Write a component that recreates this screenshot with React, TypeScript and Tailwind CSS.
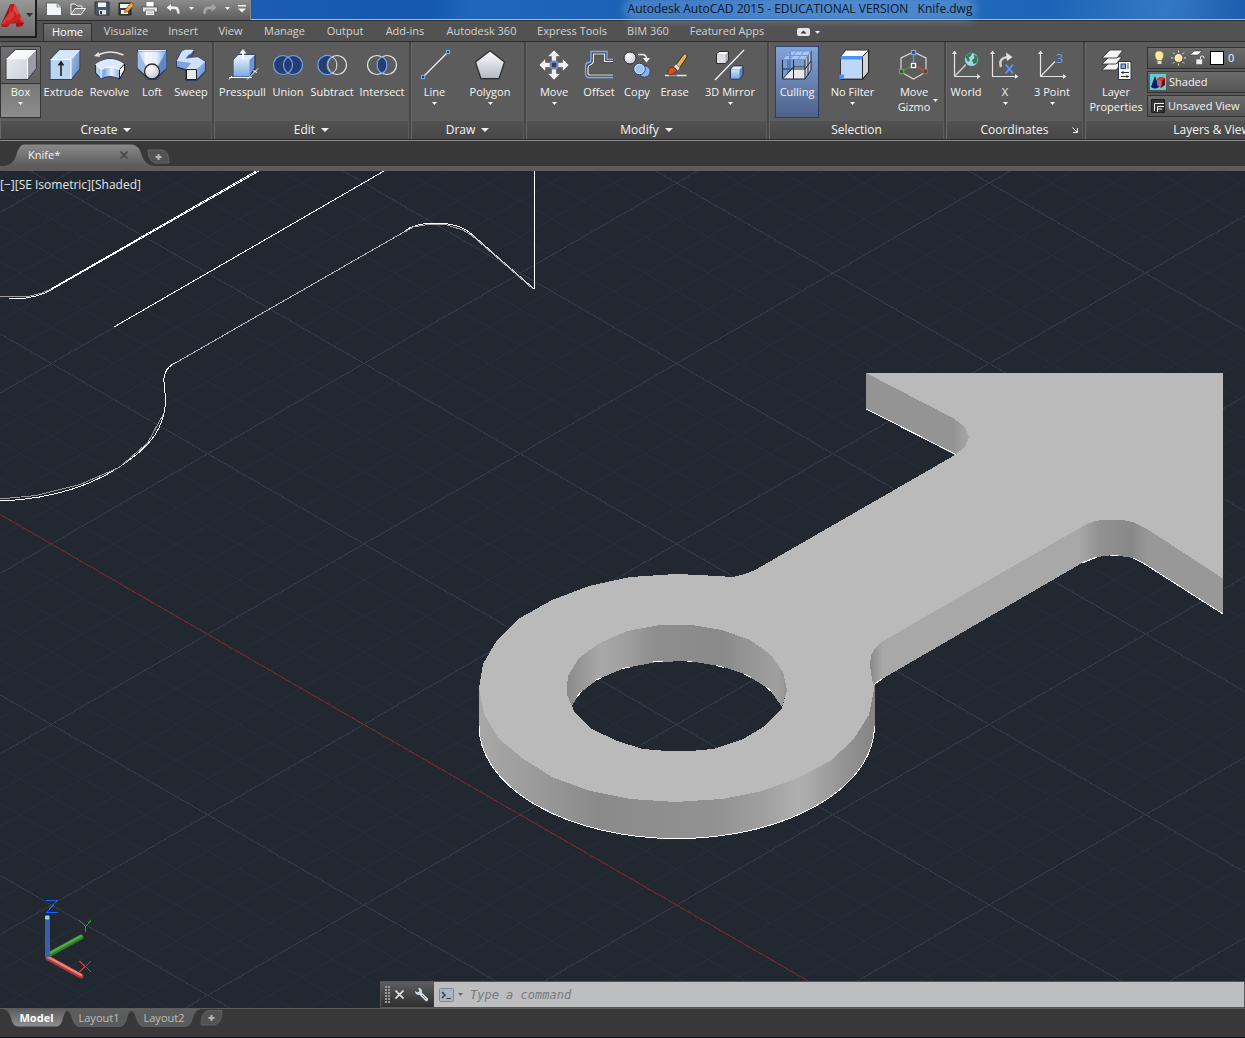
import type { ReactNode } from 'react';

/* ---------- small shared pieces ---------- */

function Caret({ className = '' }: { className?: string }) {
  return (
    <svg width="8" height="4" viewBox="0 0 8 4" className={className} aria-hidden="true">
      <path d="M0 0H8L4 4Z" fill="#f2f2f2" />
    </svg>
  );
}

function TinyCaret({ color = '#f2f2f2' }: { color?: string }) {
  return (
    <svg width="5" height="3" viewBox="0 0 5 3" aria-hidden="true">
      <path d="M0 0H5L2.5 3Z" fill={color} />
    </svg>
  );
}

function Icon32({ children }: { children: ReactNode }) {
  return (
    <svg width="32" height="32" viewBox="0 0 32 32" fill="none" className="shrink-0 overflow-visible" aria-hidden="true">
      {children}
    </svg>
  );
}

function Defs() {
  return (
    <svg width="0" height="0" className="absolute" aria-hidden="true">
      <defs>
        <linearGradient id="white" x1="0" y1="0" x2="0" y2="1">
          <stop offset="0" stopColor="#ffffff" />
          <stop offset="1" stopColor="#b4b8c4" />
        </linearGradient>
        <linearGradient id="paleWhite" x1="0" y1="0" x2="1" y2="1">
          <stop offset="0" stopColor="#e9ebf0" />
          <stop offset="1" stopColor="#cdd0da" />
        </linearGradient>
        <linearGradient id="blue" x1="0" y1="0" x2="0" y2="1">
          <stop offset="0" stopColor="#d3e5fb" />
          <stop offset="1" stopColor="#7ea9e2" />
        </linearGradient>
        <linearGradient id="blueSide" x1="0" y1="0" x2="1" y2="1">
          <stop offset="0" stopColor="#a9c4ec" />
          <stop offset="1" stopColor="#5f83bd" />
        </linearGradient>
        <linearGradient id="loft" x1="0" y1="0" x2="1" y2="0">
          <stop offset="0" stopColor="#a9c3ea" />
          <stop offset=".3" stopColor="#f4f8ff" />
          <stop offset=".65" stopColor="#e4eefc" />
          <stop offset="1" stopColor="#7ea2da" />
        </linearGradient>
        <linearGradient id="bend" x1="0" y1="0" x2="1" y2="0">
          <stop offset="0" stopColor="#c4dbf8" />
          <stop offset=".3" stopColor="#7fa9e2" />
          <stop offset=".55" stopColor="#e6f0fd" />
          <stop offset="1" stopColor="#5f8ed3" />
        </linearGradient>
        <linearGradient id="gold" x1="0" y1="0" x2="1" y2="1">
          <stop offset="0" stopColor="#ffe9a0" />
          <stop offset="1" stopColor="#c47a12" />
        </linearGradient>
        <radialGradient id="ball" cx=".35" cy=".3" r=".8">
          <stop offset="0" stopColor="#ffffff" />
          <stop offset="1" stopColor="#bfc3cc" />
        </radialGradient>
      </defs>
    </svg>
  );
}

/* ---------- ribbon icons ---------- */

const BoxIcon = () => (
  <Icon32>
    <path d="M1.5 9.5L10.5 1H31V19.5L22.5 30H1.5Z" fill="#8e929c" stroke="#2c2c2c" strokeWidth="1.4" />
    <path d="M1.5 9.5L10.5 1H31L22.5 9.5Z" fill="#f7f8fb" />
    <path d="M1.5 9.5H22.5V30H1.5Z" fill="url(#paleWhite)" />
    <path d="M22.5 9.5L31 1V19.5L22.5 30Z" fill="#9a9da8" />
    <path d="M1.5 9.5H22.5V30M22.5 9.5L31 1" stroke="#fff" />
  </Icon32>
);

const ExtrudeIcon = () => (
  <Icon32>
    <path d="M2.5 10.5L11.5 1H31.5V20L23 30H2.5Z" fill="#7a9bd0" stroke="#1d3563" strokeWidth="1.4" />
    <path d="M2.5 10.5L11.5 1H31.5L23 10.5Z" fill="#d7e6f8" />
    <path d="M2.5 10.5H23V30H2.5Z" fill="#b9d5f2" />
    <path d="M23 10.5L31.5 1V20L23 30Z" fill="url(#blueSide)" />
    <path d="M2.5 10.5H23V30M23 10.5L31.5 1" stroke="#fff" />
    <path d="M13 27V14M10.5 16.5L13 13L15.5 16.5" stroke="#222" strokeWidth="1.6" />
  </Icon32>
);

const RevolveIcon = () => (
  <Icon32>
    <path d="M4 6Q16 0 29.5 6" stroke="#e4e4e4" strokeWidth="1.4" />
    <path d="M0 7L4.5 3L6 8Z" fill="#e4e4e4" />
    <path d="M1.500 15Q16 5 30.500 15V21L25.500 30Q16 25 7 30L1.500 24Z" fill="url(#bend)" stroke="#1d3563" strokeWidth="1.2" />
    <path d="M1.500 15Q16 5 30.500 15L25.500 20.500Q16 15.500 7 20.500Z" fill="#dce9fb" />
    <path d="M25.500 20.500L30.500 15V21L25.500 30Z" fill="#f1f1f4" stroke="#222" />
    <path d="M1.500 15L7 20.500Q16 15.500 25.500 20.500M7 20.500V29.500" stroke="#fff" />
  </Icon32>
);

const LoftIcon = () => (
  <Icon32>
    <path d="M1.5 1.5H30.5V19L20 30H12L1.5 19Z" fill="url(#loft)" stroke="#1d3563" strokeWidth="1.3" />
    <path d="M1.5 2L10 17L11 27L1.5 19Z" fill="#9dbae6" />
    <path d="M30.5 2L22 17L21 27L30.5 19Z" fill="#6386c2" />
    <path d="M2 1.5H30" stroke="#e6f0fd" />
    <circle cx="16" cy="22.5" r="7.5" fill="url(#ball)" stroke="#2c2c2c" strokeWidth="1.3" />
  </Icon32>
);

const SweepIcon = () => (
  <Icon32>
    <path d="M7 2.500L10 1H18.500V4L14 9L23 8.500L30 13V22L22 31H11V21L2 18V11Z" fill="#6f93cc" stroke="#1d3563" strokeWidth="1.400" />
    <path d="M7 2.500L10 1H18.500L10.500 9.500L23 8.500L30 13L21.500 20H11.500L16 14L2 12Z" fill="#cfe0f8" stroke="#f0f6ff" strokeWidth=".6" />
    <path d="M2 12L16 14L11.500 20L2 17.500Z" fill="#7fa3da" />
    <path d="M10.500 9.500L14 5.500L18.500 4L14 9.200Z" fill="#40609a" />
    <path d="M22 20L30 13V22L22 30Z" fill="url(#blueSide)" />
    <path d="M11.500 20.500H21.500V30.500H11.500Z" fill="#e8e9ed" stroke="#222" />
  </Icon32>
);

const PresspullIcon = () => (
  <Icon32>
    <path d="M6.5 11L11 6H28V19L22.5 27.5H6.5Z" fill="#6f93cc" stroke="#1d3563" strokeWidth="1.2" />
    <path d="M6.5 11L11 6H28L22.5 11Z" fill="#dce9fb" />
    <path d="M6.5 11H22.5V27.5H6.5Z" fill="url(#blue)" />
    <path d="M16 10V3" stroke="#fff" strokeWidth="2" />
    <path d="M12.5 4.5L16 0L19.5 4.5Z" fill="#fff" />
    <path d="M2 28.500H25M2 30.500L5 27M20 30.500L31 19.500M26 21.500L30 23.500" stroke="#fff" />
  </Icon32>
);

const UnionIcon = () => (
  <Icon32>
    <circle cx="11" cy="16" r="9.5" fill="#263d70" />
    <circle cx="21" cy="16" r="9.5" fill="#263d70" />
    <circle cx="11" cy="16" r="9.5" stroke="#6ea2f0" strokeWidth="1.2" />
    <circle cx="21" cy="16" r="9.5" stroke="#6ea2f0" strokeWidth="1.2" />
  </Icon32>
);

const SubtractIcon = () => (
  <Icon32>
    <circle cx="21" cy="16" r="9.5" stroke="#e8e8e8" strokeWidth="1.2" />
    <path d="M16 7.7A9.5 9.5 0 1 0 16 24.3A9.500 9.500 0 0 1 16 7.700Z" fill="#263d70" stroke="#6ea2f0" strokeWidth="1.2" />
    <path d="M16 7.7A9.5 9.5 0 0 1 16 24.3" stroke="#e8e8e8" />
  </Icon32>
);

const IntersectIcon = () => (
  <Icon32>
    <circle cx="11" cy="16" r="9.5" stroke="#e8e8e8" strokeWidth="1.2" />
    <circle cx="21" cy="16" r="9.5" stroke="#e8e8e8" strokeWidth="1.2" />
    <path d="M16 7.7A9.5 9.5 0 0 1 16 24.3A9.5 9.5 0 0 1 16 7.7Z" fill="#263d70" stroke="#6ea2f0" strokeWidth="1.2" />
  </Icon32>
);

const LineIcon = () => (
  <Icon32>
    <path d="M5.5 26.5L27.5 4.5" stroke="#f0f0f0" strokeWidth="1.2" />
    <rect x="2.500" y="26.500" width="3" height="3" fill="#222" stroke="#78aaff" strokeWidth="1.2" />
    <rect x="27.500" y="1.500" width="3" height="3" fill="#222" stroke="#78aaff" strokeWidth="1.2" />
  </Icon32>
);

const PolygonIcon = () => (
  <Icon32>
    <path d="M16 1.7L30.5 13L25 29.7H7L1.5 13Z" fill="url(#white)" stroke="#2c2c2c" strokeWidth="1.2" />
  </Icon32>
);

const MoveIcon = () => (
  <Icon32>
    <g fill="#f0f0f0" stroke="#444" strokeWidth=".5">
      <path d="M16 1L22.500 7.500H18.500V12H13.500V7.500H9.500Z" />
      <path d="M16 31L9.500 24.500H13.500V20H18.500V24.500H22.500Z" />
      <path d="M1 16L7.500 9.500V13.500H12V18.500H7.500V22.500Z" />
      <path d="M31 16L24.500 22.500V18.500H20V13.500H24.500V9.500Z" />
    </g>
    <rect x="13" y="13" width="6" height="6" fill="#3a3f4a" stroke="#78aaff" strokeWidth="1.2" />
  </Icon32>
);

const OffsetIcon = () => (
  <Icon32>
    <path d="M30 10.500H24V2.500H8V10.500Q8 13.500 5 13.500Q2.500 14 2.500 17V24Q2.500 28.500 5 28.500H30" stroke="#78aaff" strokeWidth="1.3" />
    <path d="M30 12.500H21.500V5H10.500V12Q10 15.500 7 16Q5 16.500 5 19V24Q5 26 7 26H30" stroke="#3e3e3e" strokeWidth="2.4" />
    <path d="M30 12.500H21.500V5H10.500V12Q10 15.500 7 16Q5 16.500 5 19V24Q5 26 7 26H30" stroke="#f2f2f2" strokeWidth="1.2" />
  </Icon32>
);

const CopyIcon = () => (
  <Icon32>
    <circle cx="9" cy="9" r="6" fill="url(#ball)" stroke="#2c2c2c" />
    <path d="M17 5.5H21Q25.5 5.5 25.5 10" stroke="#f2f2f2" strokeWidth="1.3" />
    <path d="M22 9H29L25.5 13.5Z" fill="#f2f2f2" />
    <circle cx="23.5" cy="22.5" r="5.7" fill="#8cb2ec" stroke="#24447e" />
    <circle cx="18.500" cy="20" r="5.700" fill="#9fc1f2" stroke="#24447e" />
    <circle cx="18.500" cy="20" r="4.700" stroke="#dce9fb" strokeWidth=".8" />
  </Icon32>
);

const EraseIcon = () => (
  <Icon32>
    <path d="M16 17L25 5Q28 4 28 8L20 20Z" fill="url(#gold)" stroke="#3c2a08" />
    <path d="M14.5 18L17 15L21 19L18.5 22Z" fill="#d8dde8" stroke="#555" strokeWidth=".6" />
    <path d="M9 25.5Q8 19 13.5 18Q17.5 19 17.5 22Q15 26 9 25.5Z" fill="#d4551b" stroke="#7a2908" />
    <path d="M6 26.5H10M18 26.5H27.5" stroke="#e4e4e4" strokeWidth="1.5" />
    <path d="M10 26.5H18" stroke="#999" strokeWidth="1.2" />
  </Icon32>
);

const MirrorIcon = () => (
  <Icon32>
    <path d="M1 31L30 1" stroke="#f2f2f2" strokeWidth="1.3" />
    <path d="M2.5 5L5.500 2.500H14.500V11L11.500 14.500H2.500Z" fill="#aeb1bb" stroke="#2c2c2c" />
    <path d="M3 5.5H11.5V14H3Z" fill="#dcdee4" />
    <path d="M3 5L5.5 3H14L11.5 5.5Z" fill="#fff" />
    <path d="M16.5 20L19.5 17H29V26L25.5 30H16.5Z" fill="#5f83bd" stroke="#1d3563" />
    <path d="M17 20.5H25.5V29.5H17Z" fill="url(#blue)" />
    <path d="M17 20L19.5 17.5H28.5L25.5 20.5Z" fill="#e6f0fd" />
  </Icon32>
);

const CullingIcon = () => (
  <Icon32>
    <path d="M1.5 10.5L9 2H30V21L24 30H1.5Z" fill="#7b9ad0" />
    <path d="M1.5 10.5L9 2H30L24 10.5Z" fill="#a8c6f6" />
    <path d="M12.500 18H24V30H1.500Z" fill="#e6e8ee" />
    <path d="M24 10.5L30 2V21L24 30Z" fill="#c6cad4" />
    <path d="M1.500 10.500V30H24V10.500M24 30L30 21V2M12.500 10.500V30M1.500 20H24L30 12M1.500 30L12.500 18H24M27 6V26" stroke="#1c2538" />
    <path d="M7 10V23M9 2V21L1.500 30" stroke="#3f5f9c" />
    <path d="M1.500 10.500L9 2H30M1.500 10.500H24L30 2M5 6.500H27M9 10L16 2M17 10.500L23 2" stroke="#5b97f5" />
  </Icon32>
);

const NoFilterIcon = () => (
  <Icon32>
    <path d="M4 7.5L9 1.5H31.5V23L25.5 30H4Z" fill="#b5b8c2" stroke="#222" strokeWidth="1.3" />
    <path d="M4 7.5L9 1.5H31.5L25.5 7.5Z" fill="#fff" />
    <path d="M4 7.5H25.5V29.5H4Z" fill="#bcd8f6" />
    <path d="M25.5 7.5L31.5 1.5V23L25.5 30Z" fill="#d3d4da" stroke="#222" />
    <path d="M3.5 7H25.5V10.5H3.5Z" fill="#4f92f7" />
    <path d="M2.5 25.5H7V30H2.5Z" fill="#4f92f7" />
  </Icon32>
);

const GizmoIcon = () => (
  <Icon32>
    <path d="M15.5 3L28 9V23L15.5 30L3 23V9Z" stroke="#d8d8d8" strokeWidth="1.2" />
    <path d="M15.5 14V4" stroke="#5b97f5" strokeWidth="1.3" />
    <path d="M14 17L4 22" stroke="#4aa02c" strokeWidth="1.3" />
    <path d="M17 17L27 22" stroke="#d5482b" strokeWidth="1.3" />
    <rect x="13.5" y="1.5" width="4" height="4" fill="#444" stroke="#6ea2f0" strokeWidth="1.3" />
    <rect x="13.5" y="14.5" width="4" height="4" fill="#444" stroke="#fff" strokeWidth="1.3" />
    <rect x="1.5" y="20.5" width="4" height="4" fill="#444" stroke="#4fb52e" strokeWidth="1.3" />
    <rect x="25.5" y="20.5" width="4" height="4" fill="#444" stroke="#e2492b" strokeWidth="1.3" />
  </Icon32>
);

const Axes = ({ x }: { x: number }) => (
  <g transform={`translate(${x} 0)`}>
    <path d="M1.5 4V27.5H25" stroke="#e4e4e4" strokeWidth="1.2" />
    <path d="M-1 5L1.5 1.5L4 5ZM24 25L27.5 27.5L24 30Z" fill="#e4e4e4" />
  </g>
);

const WorldIcon = () => (
  <Icon32>
    <Axes x={3} />
    <path d="M4.5 27.5L16 15.5" stroke="#c9c9c9" strokeWidth="1.6" />
    <circle cx="21.5" cy="10.5" r="7" fill="#a9d4e6" stroke="#46606a" />
    <path d="M15.500 8Q18 4 22 4L21 7L18.500 8.500L20 11L18 13ZM23.500 5L27.500 7.500Q28 11 26.500 14L23.500 15L22 11L24.500 9Z" fill="#2c7f4e" />
  </Icon32>
);

const XIcon = () => (
  <Icon32>
    <Axes x={2} />
    <path d="M12 18Q9 9 19 8" stroke="#d0d0d0" strokeWidth="2.4" />
    <path d="M17 3.5L23.5 8L18 12Z" fill="#e4e4e4" />
    <path d="M16.5 15.500L24 24.500M24 15.500L16.500 24.500" stroke="#5b97f5" strokeWidth="1.8" />
  </Icon32>
);

const ThreePointIcon = () => (
  <Icon32>
    <Axes x={3} />
    <path d="M4.5 27.5L19 12.5" stroke="#e4e4e4" strokeWidth="1.2" />
    <text x="20" y="14" fill="#6b9ef0" fontSize="13" fontFamily="Open Sans, sans-serif">3</text>
  </Icon32>
);

const LayerIcon = () => (
  <Icon32>
    <g fill="#f4f4f4" stroke="#3a3a3a" strokeWidth=".9">
      <path d="M2 21L9 14H22L16 21Z" />
      <path d="M2 15L9 8H22L16 15Z" />
      <path d="M2 9L10 1H23L17 9Z" />
    </g>
    <rect x="18.5" y="12.5" width="12.5" height="18" fill="#f4f4f6" stroke="#2c3850" />
    <rect x="21" y="15" width="4.5" height="4.5" fill="#7da9ee" stroke="#24447e" />
    <path d="M28 14V20" stroke="#555" />
    <path d="M21 23.5H29M21 27.5H29M23 22V25M27 26V29" stroke="#333" />
  </Icon32>
);

/* ---------- ribbon structure ---------- */

type Tool = { label: string; icon: ReactNode; width: string; menu?: boolean; side?: boolean; active?: string };

function ToolButton({ label, icon, width, menu, side, active = '' }: Tool) {
  return (
    <button
      type="button"
      className={`relative flex h-[72px] shrink-0 flex-col items-center pt-[3px] text-[11px] leading-[15px] text-[#f4f4f4] ${width} ${active}`}
    >
      {icon}
      <span className="mt-[3px] whitespace-pre text-center">{label}</span>
      {menu && (
        <span className="mt-[3px]">
          <TinyCaret />
        </span>
      )}
      {side && (
        <span className="absolute right-1 top-[53px] flex">
          <TinyCaret />
        </span>
      )}
    </button>
  );
}

function Panel({
  title,
  width,
  pad = '',
  caret,
  launcher,
  children,
}: {
  title: string;
  width: string;
  pad?: string;
  caret?: boolean;
  launcher?: boolean;
  children: ReactNode;
}) {
  return (
    <section
      aria-label={title}
      className={`flex shrink-0 flex-col border-r-2 border-r-[#464646] bg-[#5c5c5c] shadow-[inset_1px_0_0_#686868] ${width}`}
    >
      <div className={`flex h-[79px] pt-1 ${pad}`}>{children}</div>
      <div className="relative mx-px flex h-[18px] items-center justify-center gap-[6px] bg-linear-to-b from-[#525252] to-[#474747] text-[12px] text-[#f4f4f4]">
        <span>{title}</span>
        {caret && <Caret />}
        {launcher && (
          <button type="button" aria-label={`${title} settings`} className="absolute right-1 top-[6px]">
            <svg width="6" height="6" viewBox="0 0 6 6" fill="none" stroke="#f2f2f2">
              <path d="M.5 .5L5 5M5.5 1V5.5H1" />
            </svg>
          </button>
        )}
      </div>
    </section>
  );
}

const boxActive =
  'shadow-[inset_0_0_0_1px_#343434] bg-[linear-gradient(#707070_0,#606060_37px,#343434_37px,#343434_38px,#787878_38px,#8d8d8d_72px)]';

function Ribbon() {
  return (
    <div className="flex h-[98px] overflow-hidden border-b border-b-[#2b2b2b] bg-[#5c5c5c]">
      <Panel title="Create" width="w-[214px]" caret>
        <ToolButton label="Box" icon={<BoxIcon />} width="w-[41px]" menu active={boxActive} />
        <ToolButton label="Extrude" icon={<ExtrudeIcon />} width="w-[45px]" />
        <ToolButton label="Revolve" icon={<RevolveIcon />} width="w-[47px]" />
        <ToolButton label="Loft" icon={<LoftIcon />} width="w-[38px]" />
        <ToolButton label="Sweep" icon={<SweepIcon />} width="w-[40px]" />
      </Panel>
      <Panel title="Edit" width="w-[197px]" pad="pl-1" caret>
        <ToolButton label="Presspull" icon={<PresspullIcon />} width="w-[49px]" />
        <ToolButton label="Union" icon={<UnionIcon />} width="w-[42px]" />
        <ToolButton label="Subtract" icon={<SubtractIcon />} width="w-[46px]" />
        <ToolButton label="Intersect" icon={<IntersectIcon />} width="w-[54px]" />
      </Panel>
      <Panel title="Draw" width="w-[115px]" caret>
        <ToolButton label="Line" icon={<LineIcon />} width="w-[47px]" menu />
        <ToolButton label="Polygon" icon={<PolygonIcon />} width="w-[64px]" menu />
      </Panel>
      <Panel title="Modify" width="w-[243px]" pad="pl-[6px]" caret>
        <ToolButton label="Move" icon={<MoveIcon />} width="w-[44px]" menu />
        <ToolButton label="Offset" icon={<OffsetIcon />} width="w-[46px]" />
        <ToolButton label="Copy" icon={<CopyIcon />} width="w-[30px]" />
        <ToolButton label="Erase" icon={<EraseIcon />} width="w-[45px]" />
        <ToolButton label="3D Mirror" icon={<MirrorIcon />} width="w-[66px]" menu />
      </Panel>
      <Panel title="Selection" width="w-[177px]" pad="pl-[6px]">
        <ToolButton
          label="Culling"
          icon={<CullingIcon />}
          width="w-[44px]"
          active="shadow-[inset_0_0_0_1px_#2c3e63] bg-linear-to-b from-[#84a5d8] to-[#4d618a]"
        />
        <ToolButton label="No Filter" icon={<NoFilterIcon />} width="w-[67px]" menu />
        <ToolButton label={'Move\nGizmo'} icon={<GizmoIcon />} width="w-[56px]" side />
      </Panel>
      <Panel title="Coordinates" width="w-[139px]" launcher>
        <ToolButton label="World" icon={<WorldIcon />} width="w-[40px]" />
        <ToolButton label="X" icon={<XIcon />} width="w-[38px]" menu />
        <ToolButton label="3 Point" icon={<ThreePointIcon />} width="w-[56px]" menu />
      </Panel>
      <Panel title="Layers & View" width="w-[270px]" caret>
        <ToolButton label={'Layer\nProperties'} icon={<LayerIcon />} width="w-[62px]" />
        <LayerControls />
      </Panel>
    </div>
  );
}

const field = 'flex h-[22px] items-center border border-[#333] bg-linear-to-b from-[#6b6b6b] to-[#555]';

function LayerControls() {
  return (
    <div className="flex flex-1 flex-col gap-[2px] pt-px text-[11px] text-[#f4f4f4]">
      <button type="button" aria-label="Current layer 0" className={`${field} pl-[5px]`}>
        <svg width="57" height="18" viewBox="0 0 57 18" fill="none" aria-hidden="true">
          <path d="M6 2Q10.5 2 10.500 6.500Q10.500 9 8.500 11.500H4.500Q2 9 2 6.500Q2 2 6 2Z" fill="#ffe9a0" stroke="#8c7a3a" strokeWidth=".6" />
          <path d="M4.5 12H8.5V15H4.5Z" fill="#d9d9d9" />
          <circle cx="25.5" cy="9" r="3.5" fill="#ffe9a0" stroke="#fff7d6" />
          <path d="M25.5 1.500V3.500M25.500 14.500V16.500M18 9H20M31 9H33M20 3.500L21.500 5M31 3.500L29.500 5M20 14.500L21.500 13M31 14.500L29.500 13" stroke="#fff0b8" />
          <path d="M37 6L41 2H49L45 6Z" fill="#fff" stroke="#333" strokeWidth=".6" />
          <path d="M43 10H49.5V15.5H43Z" fill="#ececec" stroke="#555" strokeWidth=".6" />
          <path d="M47.5 10V8Q48 6.500 50 7Q51 7.500 51 9.500" stroke="#ececec" />
        </svg>
        <span className="mr-1 size-[14px] border border-black bg-white" />
        <span>0</span>
      </button>
      <label className={`${field} pl-[2px]`}>
        <svg width="16" height="16" viewBox="0 0 16 16" aria-hidden="true">
          <path d="M0 0H16V16H0Z" fill="#5fcfd0" />
          <path d="M1 13L5 2L9 13Q5 16 1 13Z" fill="#14186e" />
          <path d="M7 5L10 3L15 4V11L11 14L7 11Z" fill="#5c1214" />
          <path d="M7 5L10 3L15 4L12 7Z" fill="#ff2626" />
          <path d="M7 5L12 7L11 14L7 11Z" fill="#b06a6a" />
        </svg>
        <select aria-label="Visual style" className="ml-[3px] w-40 appearance-none bg-transparent outline-none">
          <option>Shaded</option>
        </select>
      </label>
      <label className={`${field} pl-[3px]`}>
        <svg width="14" height="14" viewBox="0 0 14 14" fill="none" aria-hidden="true">
          <path d="M.5 .5H13.5V13.5H.5Z" fill="#333" stroke="#1e1e1e" />
          <path d="M3.500 12V4.500H13M6.500 13V7.500H13M6.500 10H11" stroke="#f2f2f2" />
        </svg>
        <select aria-label="View" className="ml-[3px] w-40 appearance-none bg-transparent outline-none">
          <option>Unsaved View</option>
        </select>
      </label>
    </div>
  );
}

/* ---------- header ---------- */

function AppLogo() {
  return (
    <svg width="26" height="28" viewBox="0 0 26 28" aria-hidden="true">
      <path d="M10.500 3H14.500L24 22L22 25L16.500 26L16 22.500H10L8 26L1.500 26L1 24Z" fill="#b81b1e" />
      <path d="M10.500 3L1 24L8 21Q13 18 15 14L13 8L11 12Z" fill="#dd3a37" />
      <path d="M10.500 3L9 12L4 19L1 24Z" fill="#8f1418" />
      <path d="M14.500 3L24 22L20 19L13 8Z" fill="#e04a44" />
      <path d="M6 20Q14 19 19 12L21 16Q17 21 10 22.500L4 24Z" fill="#c92427" />
      <path d="M16 22L24 22L22 25L16.500 26Z" fill="#9c171b" />
    </svg>
  );
}

function QuickAccess() {
  return (
    <div className="flex h-full w-[214px] items-center gap-2 border-r border-r-[#888] bg-linear-to-b from-[#8c8c8c] to-[#5d5d5d] pb-[3px] pl-[9px]">
      <button type="button" aria-label="New">
        <svg width="16" height="14" viewBox="0 0 16 14"><path d="M.5 1H11L15.5 5V13.5H.5Z" fill="#f4f5f8" stroke="#444" strokeWidth=".7" /><path d="M11 1V5H15.5" fill="#c4c6cc" stroke="#777" strokeWidth=".6" /></svg>
      </button>
      <button type="button" aria-label="Open">
        <svg width="16" height="14" viewBox="0 0 16 14" fill="none" stroke="#f2f2f2"><path d="M1 12.5V2H5L7 4H12V6" fill="#666" /><path d="M1 12.5L5 6.5H15.5L11 12.5Z" fill="#888" /></svg>
      </button>
      <button type="button" aria-label="Save">
        <svg width="16" height="15" viewBox="0 0 16 15"><path d="M1 1H15V14H2.5L1 12.5Z" fill="#4a5670" stroke="#333" /><path d="M4 1.5H12V6H4Z" fill="#f4f4f4" /><path d="M5 9H12V13.5H5Z" fill="#e0e3ea" /><path d="M6 10H8V13H6Z" fill="#333" /></svg>
      </button>
      <button type="button" aria-label="Save as">
        <svg width="16" height="15" viewBox="0 0 16 15"><path d="M1 2H13V14H1Z" fill="#3d3d3d" stroke="#222" /><path d="M2 3H12V7H2Z" fill="#f4f4f4" /><path d="M3 9H10V13H3Z" fill="#eee" /><path d="M7 9L13 1.5L16 4L10 10.5L6.5 11.5Z" fill="#f0a830" stroke="#7a4b08" strokeWidth=".7" /><path d="M13 1.5L14 .5L16 3L15.5 4Z" fill="#e0413a" /></svg>
      </button>
      <button type="button" aria-label="Plot">
        <svg width="16" height="15" viewBox="0 0 16 15"><path d="M4 .5H12V6H4Z" fill="#fff" stroke="#666" strokeWidth=".7" /><path d="M.5 6H15.5V11H.5Z" fill="#e8e8e8" stroke="#444" strokeWidth=".7" /><path d="M3.5 9H12.5V14.5H3.5Z" fill="#f8f8f8" stroke="#555" strokeWidth=".7" /><path d="M5 11H11M5 12.7H11" stroke="#999" strokeWidth=".7" /></svg>
      </button>
      <button type="button" aria-label="Undo">
        <svg width="15" height="13" viewBox="0 0 15 13"><path d="M0 5.5L5.5 1V4H9Q14 4 14 12H11Q11 7.5 8.5 7.5H5.5V10Z" fill="#f0f0f0" stroke="#555" strokeWidth=".6" /></svg>
      </button>
      <TinyCaret />
      <button type="button" aria-label="Redo">
        <svg width="15" height="13" viewBox="0 0 15 13"><path d="M15 5.5L9.5 1V4H6Q1 4 1 12H4Q4 7.5 6.5 7.5H9.5V10Z" fill="#a6a6a6" stroke="#777" strokeWidth=".6" /></svg>
      </button>
      <TinyCaret />
      <button type="button" aria-label="Customize quick access toolbar">
        <svg width="8" height="8" viewBox="0 0 8 8" fill="#f4f4f4"><path d="M0 0H8V1.5H0ZM0 3.5H8L4 7.5Z" /></svg>
      </button>
    </div>
  );
}

const tabs = [
  { label: 'Home', width: 'w-[49px]' },
  { label: 'Visualize', width: 'w-[68px]' },
  { label: 'Insert', width: 'w-[46px]' },
  { label: 'View', width: 'w-[49px]' },
  { label: 'Manage', width: 'w-[59px]' },
  { label: 'Output', width: 'w-[62px]' },
  { label: 'Add-ins', width: 'w-[58px]' },
  { label: 'Autodesk 360', width: 'w-[95px]' },
  { label: 'Express Tools', width: 'w-[86px]' },
  { label: 'BIM 360', width: 'w-[66px]' },
  { label: 'Featured Apps', width: 'w-[92px]' },
];

function Header() {
  return (
    <header className="flex h-[42px] overflow-hidden border-b border-b-[#2e2e2e] bg-[#525252]">
      <button
        type="button"
        aria-label="Application menu"
        className="flex h-[38px] w-[37px] shrink-0 items-center border-b-2 border-r-2 border-[#1e1e1e] bg-linear-to-b from-[#979797] to-[#6e6e6e] pb-[6px]"
      >
        <AppLogo />
        <svg width="7" height="4" viewBox="0 0 7 4"><path d="M0 0H7L3.5 4Z" fill="#2f3338" /></svg>
      </button>
      <div className="flex min-w-0 flex-1 flex-col">
        <div className="flex h-[21px] border-b border-b-[#2e2e2e]">
          <QuickAccess />
          <div className="relative flex-1 border-b border-b-[#8fc4f0] bg-[linear-gradient(100deg,#1c5cb4_0%,#1458b0_18%,#1f66bd_22%,#1a60b4_42%,#2a70c2_60%,#1d64b6_80%,#3478c4_92%,#1c5cae_100%)]">
            <h1 className="flex h-full items-center justify-center pb-px pl-[104px] text-[12px] leading-4 text-[#0a1626]">
              <span className="whitespace-nowrap rounded-full bg-[#8fbbe8]/35 shadow-[0_0_8px_5px_rgba(143,187,232,0.35)]">
                Autodesk AutoCAD 2015 - EDUCATIONAL VERSION &nbsp; Knife.dwg
              </span>
            </h1>
          </div>
        </div>
        <nav aria-label="Ribbon tabs" className="flex h-5 items-end pl-[6px] text-[11px]">
          {tabs.map((t, i) => (
            <button
              key={t.label}
              type="button"
              className={
                i === 0
                  ? `h-[18px] shrink-0 border border-b-0 border-[#2e2e2e] bg-linear-to-b from-[#6e6e6e] to-[#5c5c5c] pb-[2px] leading-[14px] text-white ${t.width}`
                  : `h-[18px] shrink-0 whitespace-nowrap pb-[2px] leading-[16px] text-[#d2d2d2] ${t.width}`
              }
            >
              {t.label}
            </button>
          ))}
          <button type="button" aria-label="Minimize ribbon" className="ml-6 flex h-[18px] items-center gap-[5px]">
            <svg width="13" height="8" viewBox="0 0 13 8"><rect width="13" height="8" rx="2" fill="#e6e6ea" /><path d="M3.5 5.5H9.5L6.5 2.5Z" fill="#333" /></svg>
            <TinyCaret />
          </button>
        </nav>
      </div>
    </header>
  );
}

function FileTabs() {
  return (
    <div className="border-b-[5px] border-t border-b-[#5c5c5c] border-t-[#8a8a8a] bg-[#383838]">
      <div className="flex h-[25px] items-end pl-1 text-[11px]">
        <div className="relative flex h-[22px] w-[150px] items-center justify-between pl-6 pr-[26px]">
          <svg viewBox="0 0 150 22" preserveAspectRatio="none" className="absolute inset-0 size-full" aria-hidden="true">
            <defs>
              <linearGradient id="fileTab" x1="0" y1="0" x2="0" y2="1">
                <stop offset="0" stopColor="#8a8a8a" />
                <stop offset="1" stopColor="#5c5c5c" />
              </linearGradient>
            </defs>
            <path d="M0 22Q9 21 12 12Q15 .5 20 .5H128Q135 1 138 12Q141 21 150 22Z" fill="url(#fileTab)" />
          </svg>
          <span className="relative text-[#f4f4f4]">Knife*</span>
          <button type="button" aria-label="Close Knife" className="relative">
            <svg width="8" height="8" viewBox="0 0 8 8" stroke="#4a4a4a" strokeWidth="1.8"><path d="M.5 .5L7.5 7.5M7.5 .5L.5 7.5" /></svg>
          </button>
        </div>
        <button type="button" aria-label="New tab" className="-ml-[7px] mb-[2px]">
          <svg width="23" height="15" viewBox="0 0 23 15"><path d="M1 1H15Q22 2 22 14H8Q1 12 1 1Z" fill="#525252" stroke="#626262" /><path d="M11.500 5V11M8.500 8H14.500" stroke="#b4b4b4" strokeWidth="2" /></svg>
        </button>
      </div>
    </div>
  );
}

/* ---------- model space ---------- */

const SLOPE = 0.5774;
const gridLines = Array.from({ length: 120 }, (_, i) => i - 60);

/* Isometric grid: every fifth line is a major one. */
function Grid() {
  const width = 2600;
  const rise = width * SLOPE;
  const lines = (major: boolean) =>
    gridLines
      .filter((k) => (k % 5 === 0) === major)
      .map((k) => {
        const down = 153.3 + k * 36.1;
        const up = 573.6 + k * 36.1;
        return `M0 ${down}L${width} ${down + rise}M0 ${up}L${width} ${up - rise}`;
      })
      .join('');
  return (
    <g fill="none" shapeRendering="crispEdges">
      <path d={lines(false)} stroke="#252d38" />
      <path d={lines(true)} stroke="#323a4a" />
    </g>
  );
}

function Wireframe() {
  return (
    <g fill="none" stroke="#fff" shapeRendering="crispEdges">
      <path d="M259 171L50 290.500Q40 296 26 298H9" />
      <path d="M258 170L50 289.500" />
      <path d="M0 296.500H28L42 293L51 289" stroke="#a0a0a0" />
      <path d="M384 171L114 327" />
      <path d="M404 232L177 362" stroke="#b4b6ba" />
      <path d="M404 231.500Q414 223.500 434 223Q460 223 472 234.500L534 289" />
      <path d="M405 232L413 227L428 224.500H445L463 230L472 235.500L533 289" stroke="#a5a5a5" />
      <path d="M534.5 171V289" />
      <path d="M177 362Q163 368 164 382L165.500 398Q166 412 159 428Q151 444 132 458C100 483 55 499 0 501" />
      <path d="M163 415L147.500 443L119 467.500L80 484.500L36 495.500L0 499" stroke="#9a9a9a" />
    </g>
  );
}

const topFace =
  'M866 373H1223V578.5L1147 529L1133 522L1122 520H1102L1095 521L1087 524L1078 529L883 641L876 647L871 655L870 665L872 680L874 685V690L869 715L853 740L830 761L798 778L762 791L722 799L675 802L630 799L590 791L552 777L522 758L499 739L484 714L479 688L483 664L497 640L520 618L552 600L589 586L630 577L675 574L700 575L733 577L745 574L755 570L955 455L965 447L969 437L965 427L953 418Z';
const hole =
  'M567 687L568 676L579 658L600 643L627 631L660 625H692L722 630L750 640L770 654L783 672L787 690L782 708L765 726L743 739L713 749L690 751H667L643 749L617 741L592 729L575 713L572 706L567 695Z';

function Solid() {
  return (
    <g shapeRendering="crispEdges">
      <defs>
        <linearGradient id="ring" gradientUnits="userSpaceOnUse" x1="479" y1="0" x2="875" y2="0">
          <stop offset="0" stopColor="#a8a8a8" />
          <stop offset=".1" stopColor="#9f9f9f" />
          <stop offset=".3" stopColor="#8a8a8a" />
          <stop offset=".6" stopColor="#929292" />
          <stop offset=".72" stopColor="#a0a0a0" />
          <stop offset=".81" stopColor="#b0b0b0" />
          <stop offset=".92" stopColor="#949494" />
          <stop offset="1" stopColor="#848484" />
        </linearGradient>
        <linearGradient id="bore" gradientUnits="userSpaceOnUse" x1="567" y1="0" x2="787" y2="0">
          <stop offset="0" stopColor="#8a8a8a" />
          <stop offset=".15" stopColor="#a8a8a8" />
          <stop offset=".26" stopColor="#a0a0a0" />
          <stop offset=".4" stopColor="#8e8e8e" />
          <stop offset=".7" stopColor="#8a8a8a" />
          <stop offset=".95" stopColor="#a0a0a0" />
          <stop offset="1" stopColor="#949494" />
        </linearGradient>
        <linearGradient id="edge" gradientUnits="userSpaceOnUse" x1="870" y1="0" x2="1223" y2="0">
          <stop offset="0" stopColor="#888" />
          <stop offset=".035" stopColor="#a8a8a8" />
          <stop offset=".59" stopColor="#a8a8a8" />
          <stop offset=".65" stopColor="#929292" />
          <stop offset=".74" stopColor="#888" />
          <stop offset=".79" stopColor="#989898" />
          <stop offset="1" stopColor="#989898" />
        </linearGradient>
        <linearGradient id="barb" gradientUnits="userSpaceOnUse" x1="866" y1="0" x2="969" y2="0">
          <stop offset="0" stopColor="#949494" />
          <stop offset=".85" stopColor="#949494" />
          <stop offset="1" stopColor="#a8a8a8" />
        </linearGradient>
      </defs>
      <path d="M479 688L484 714L499 739L522 758L552 777L590 791L630 799L675 802L722 799L762 791L798 778L830 761L853 740L869 715L874.500 685V726A197.500 112.500 0 0 1 479 726Z" fill="url(#ring)" />
      <path d="M479 726A197.500 112.500 0 0 0 874.500 726" fill="none" stroke="#fff" />
      <path d={topFace + hole} fillRule="evenodd" fill="#bababa" />
      <path d="M866 373L953 418L965 427L969 437L965 447L955 455L866 409Z" fill="url(#barb)" />
      <path d="M866 409L956 454.500" stroke="#fff" />
      <path d="M1223 578.5L1147 529L1133 522L1122 520H1102L1095 521L1087 524L1078 529L883 641L876 647L871 655L870 665L872 680L874 685L882 679L1082 563L1097 557L1113 555L1133 558L1143 563L1223 614.5Z" fill="url(#edge)" />
      <path d="M874 684.500L882 679M1082 563L1097 557M1110 555.500H1118M1133 558L1143 563L1223 614" fill="none" stroke="#fff" />
      <path d="M572 706L567 695V687L568 676L579 658L600 643L627 631L660 625H692L722 630L750 640L770 654L783 672L787 690L782 707L770 690L747 675L720 666L688 661L657 662L625 668L598 679L579 694Z" fill="url(#bore)" />
      <path d="M576 698L582 691M595 680.500L601 678M622 668.500L630 667M653 662L663 661.500M687 661L692 662M716 665.500L724 667.500M744 674L751 677.500M766 687L772 692" fill="none" stroke="#fff" />
    </g>
  );
}

function UcsIcon() {
  return (
    <g fill="none" strokeLinecap="round">
      <path d="M50 954L81 937" stroke="#2f7d2f" strokeWidth="5" />
      <path d="M50 953L81 936" stroke="#4fae4a" strokeWidth="2" />
      <path d="M48 958L81 976" stroke="#a83c3c" strokeWidth="5" />
      <path d="M48 957L81 975" stroke="#f08080" strokeWidth="2.5" />
      <path d="M47.5 918V957" stroke="#3a5ea8" strokeWidth="5" strokeLinecap="butt" />
      <path d="M46 916H49V919H46Z" fill="#8fd4f0" stroke="#8fd4f0" />
      <g shapeRendering="crispEdges" strokeLinecap="butt">
        <path d="M46 900.5H57.5L46.5 912.5H58" stroke="#1464ff" />
        <path d="M79.5 920.5L85.5 926.5L91 920.5M85.5 926.5V932" stroke="#23a023" />
        <path d="M79.5 961L91 972M91 961L79.5 972" stroke="#d23232" />
      </g>
    </g>
  );
}

function CommandLine() {
  return (
    <form className="absolute bottom-0 left-[380px] right-0 flex h-[27px] border border-[#555]" onSubmit={(e) => e.preventDefault()}>
      <div className="flex w-[53px] shrink-0 items-center bg-linear-to-b from-[#5e5e5e] to-[#2f2f2f] pl-1">
        <svg width="5" height="18" viewBox="0 0 5 18" fill="#9a9a9a" aria-hidden="true">
          {[0, 3, 6, 9, 12, 15].map((y) => (
            <path key={y} d={`M0 ${y}H2V${y + 2}H0ZM3 ${y}H5V${y + 2}H3Z`} />
          ))}
        </svg>
        <button type="button" aria-label="Close command line" className="ml-[5px]">
          <svg width="9" height="9" viewBox="0 0 9 9" stroke="#dcdcdc" strokeWidth="1.8"><path d="M.5 .5L8.5 8.5M8.5 .5L.5 8.5" /></svg>
        </button>
        <button type="button" aria-label="Customize" className="ml-[10px]">
          <svg width="15" height="15" viewBox="0 0 15 15" fill="none"><path d="M6 6L12.500 12.500" stroke="#d4dae4" strokeWidth="3.200" strokeLinecap="round" /><path d="M4 1Q7.500 .5 8 4Q8 7.500 4.500 8Q1 7.500 1 4L4 5.500L5.500 4Z" fill="#d4dae4" /><path d="M8 8L12 12" stroke="#7d8591" /></svg>
        </button>
      </div>
      <div className="flex min-w-0 flex-1 items-center bg-[#bdbec0] pl-[5px]">
        <svg width="15" height="14" viewBox="0 0 15 14" fill="none" aria-hidden="true"><rect x=".5" y=".5" width="14" height="13" rx="1" fill="#adb5c1" stroke="#7c8898" /><path d="M3 4L6 7L3 10" stroke="#333d4c" strokeWidth="1.5" /><path d="M7.5 10.5H12" stroke="#333d4c" /></svg>
        <span className="ml-1 mr-[7px] flex">
          <TinyCaret color="#666" />
        </span>
        <input
          aria-label="Command"
          placeholder="Type a command"
          className="min-w-0 flex-1 bg-transparent font-['DejaVu_Sans_Mono',monospace] text-[12px] italic outline-none placeholder:text-[#77797c]"
        />
      </div>
    </form>
  );
}

function Viewport() {
  return (
    <main className="relative min-h-0 flex-1 overflow-hidden bg-[#212830]">
      <svg width="100%" height="100%" className="absolute inset-0" role="img" aria-label="Knife model, isometric view">
        <g transform="translate(0 -171)">
          <Grid />
          <path d="M0 514.5L845 1002.4" stroke="#7a2328" shapeRendering="crispEdges" />
          <Wireframe />
          <Solid />
          <UcsIcon />
        </g>
      </svg>
      <p className="relative pt-[6px] text-[12px] leading-4 text-[#e4e6e8]">[−][SE Isometric][Shaded]</p>
      <CommandLine />
    </main>
  );
}

/* ---------- layout tabs ---------- */

function LayoutTab({ label, width, active }: { label: string; width: string; active?: boolean }) {
  return (
    <button type="button" className={`relative -mr-[6px] h-[18px] shrink-0 ${width} ${active ? 'z-10 font-bold text-white' : 'text-[#bdbdbd]'}`}>
      <svg viewBox="0 0 70 18" preserveAspectRatio="none" className="absolute inset-0 size-full" aria-hidden="true">
        <defs>
          <linearGradient id="layoutTab" x1="0" y1="0" x2="0" y2="1">
            <stop offset="0" stopColor="#5c5c5c" />
            <stop offset="1" stopColor="#8e8e8e" />
          </linearGradient>
        </defs>
        <path d="M0 0Q6 1 8 8Q10 17 15 17.5H56Q61 17 63 8Q65 1 70 0Z" fill={active ? 'url(#layoutTab)' : '#5c5c5c'} stroke={active ? 'none' : '#6c6c6c'} strokeWidth=".6" />
      </svg>
      <span className="relative">{label}</span>
    </button>
  );
}

function LayoutTabs() {
  return (
    <footer className="h-[30px] border-b border-t border-b-[#0d151c] border-t-[#5c5c5c] bg-[#383838]">
      <nav aria-label="Layouts" className="flex pl-[3px] text-[11px] leading-[16px]">
        <LayoutTab label="Model" width="w-[67px]" active />
        <LayoutTab label="Layout1" width="w-[70px]" />
        <LayoutTab label="Layout2" width="w-[72px]" />
        <button type="button" aria-label="New layout" className="ml-[6px] h-[17px]">
          <svg width="23" height="16" viewBox="0 0 23 16"><path d="M1 15Q1 3 8 .5H22Q22 12 15 15Z" fill="#525252" stroke="#606060" /><path d="M11.500 5V11M8.500 8H14.500" stroke="#b4b4b4" strokeWidth="2" /></svg>
        </button>
      </nav>
    </footer>
  );
}

export default function App() {
  return (
    <div className="flex h-screen min-h-[600px] flex-col overflow-hidden bg-[#383838] font-['Open_Sans','Noto_Sans',sans-serif]">
      <Defs />
      <Header />
      <Ribbon />
      <FileTabs />
      <Viewport />
      <LayoutTabs />
    </div>
  );
}
